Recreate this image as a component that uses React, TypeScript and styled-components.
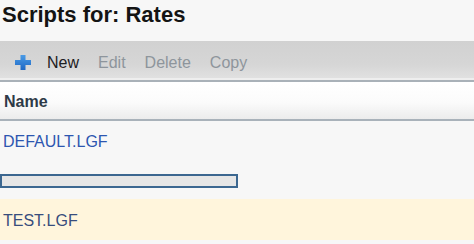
import * as React from 'react';
import styled, { createGlobalStyle } from 'styled-components';

const GlobalStyle = createGlobalStyle`
  html, body {
    margin: 0;
    padding: 0;
    background: #f7f7f7;
    font-family: "Liberation Sans", Arial, sans-serif;
  }
`;

const Page = styled.div`
  width: 474px;
  height: 244px;
  overflow: hidden;
  background: #f7f7f7;
`;

const Title = styled.h2`
  margin: 0;
  height: 39px;
  padding: 2px 0 0 2px;
  font-size: 22px;
  line-height: 25px;
  font-weight: bold;
  color: #141414;
`;

const Toolbar = styled.div`
  display: flex;
  align-items: center;
  gap: 19px;
  height: 41px;
  padding: 4px 0 0 15px;
  box-sizing: border-box;
  background: linear-gradient(#d1d1d1, #d6d6d6 60%, #e2e2e2);
  border-bottom: 2px solid #a9b1b8;
  box-shadow: inset 0 -2px 0 #eeeeee;
`;

const ToolButton = styled.button<{ disabled?: boolean }>`
  display: flex;
  align-items: center;
  gap: 16px;
  border: none;
  background: none;
  padding: 0;
  margin: 0;
  font-family: inherit;
  font-size: 16px;
  color: ${(p) => (p.disabled ? '#8e959c' : '#1d2023')};
  cursor: ${(p) => (p.disabled ? 'default' : 'pointer')};
`;

const HeaderRow = styled.div`
  display: flex;
  align-items: center;
  height: 39px;
  box-sizing: border-box;
  padding: 3px 0 0 4px;
  background: linear-gradient(#ffffff, #fbfbfb 55%, #ececec);
  border-bottom: 2px solid #a9b2ba;
  font-size: 16px;
  font-weight: bold;
  color: #2e3a47;
`;

const Row = styled.div<{ $height: number; $highlight?: boolean }>`
  display: flex;
  align-items: center;
  height: ${(p) => p.$height}px;
  box-sizing: border-box;
  padding: 2px 0 0 3px;
  background: ${(p) => (p.$highlight ? '#fff5dc' : 'transparent')};
  font-size: 16px;
  color: ${(p) => (p.$highlight ? '#384d7c' : '#2d56b0')};
`;

const EditRow = styled.div`
  height: 38px;
  box-sizing: border-box;
  padding-top: 13px;
`;

const NameInput = styled.input`
  display: block;
  width: 238px;
  height: 14px;
  box-sizing: border-box;
  margin: 0;
  padding: 0;
  border: 2px solid #3c6790;
  background: #e6e6e6;
  outline: none;
`;

function PlusIcon() {
  return (
    <svg width="16" height="15" viewBox="0 0 16 15">
      <defs>
        <linearGradient id="plusFill" x1="0" y1="0" x2="0" y2="1">
          <stop offset="0" stopColor="#4a9be6" />
          <stop offset="1" stopColor="#1f68c4" />
        </linearGradient>
      </defs>
      <path d="M5.5 0h5v5h5.5v5h-5.5v5h-5v-5h-5.5v-5h5.5z" fill="url(#plusFill)" />
    </svg>
  );
}

export default function App() {
  return (
    <Page>
      <GlobalStyle />
      <Title>Scripts for: Rates</Title>
      <Toolbar>
        <ToolButton>
          <PlusIcon />
          New
        </ToolButton>
        <ToolButton disabled>Edit</ToolButton>
        <ToolButton disabled>Delete</ToolButton>
        <ToolButton disabled>Copy</ToolButton>
      </Toolbar>
      <HeaderRow>Name</HeaderRow>
      <Row $height={40}>DEFAULT.LGF</Row>
      <EditRow>
        <NameInput defaultValue="" />
      </EditRow>
      <Row $height={41} $highlight>
        TEST.LGF
      </Row>
    </Page>
  );
}
